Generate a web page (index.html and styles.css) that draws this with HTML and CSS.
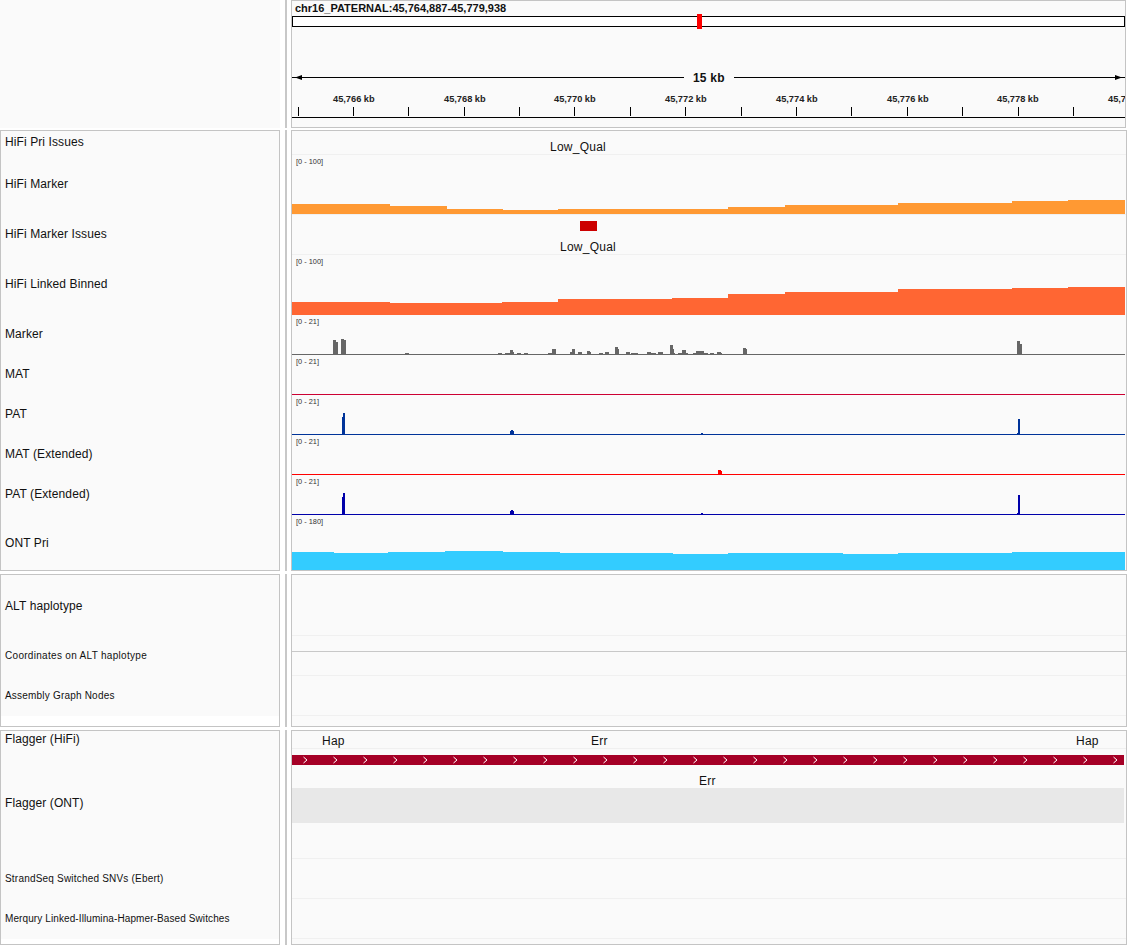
FILE: index.html
```html
<!DOCTYPE html>
<html lang="en">
<head>
<meta charset="utf-8">
<title>IGV chr16_PATERNAL</title>
<link rel="stylesheet" href="styles.css">
</head>
<body>
<main class="browser">

  <section class="row row-header">
    <div class="names names-plain"></div>
    <div class="gutter"></div>
    <div class="tracks tracks-header">
      <svg class="plot" width="833" height="126" viewBox="292 1 833 126">
        <text class="locus" x="295" y="12">chr16_PATERNAL:45,764,887-45,779,938</text>
        <rect class="ideogram" x="292.5" y="16.5" width="832" height="10"/>
        <rect class="cursor" x="697" y="14" width="5" height="15"/>
        <path class="ink" d="M292 77.5H684M734 77.5H1125"/>
        <path class="head" d="M302 75L295 77.5L302 80ZM1115 75L1122 77.5L1115 80Z"/>
        <text class="span" x="693" y="82">15 kb</text>
        <g class="ticklabels">
          <text x="333" y="102">45,766 kb</text>
          <text x="444" y="102">45,768 kb</text>
          <text x="554" y="102">45,770 kb</text>
          <text x="665" y="102">45,772 kb</text>
          <text x="776" y="102">45,774 kb</text>
          <text x="887" y="102">45,776 kb</text>
          <text x="997" y="102">45,778 kb</text>
          <text x="1108" y="102">45,780 kb</text>
        </g>
        <path class="ink" d="M298.5 107V116M353.5 107V116M408.5 107V116M464.5 107V116M519.5 107V116M574.5 107V116M630.5 107V116M685.5 107V116M741.5 107V116M796.5 107V116M851.5 107V116M907.5 107V116M962.5 107V116M1018.5 107V116M1073.5 107V116M292 117.5H1125"/>
      </svg>
    </div>
  </section>

  <section class="row row-data">
    <div class="names">
      <div class="name h24">HiFi Pri Issues</div>
      <div class="name h60">HiFi Marker</div>
      <div class="name h40">HiFi Marker Issues</div>
      <div class="name h60">HiFi Linked Binned</div>
      <div class="name h40">Marker</div>
      <div class="name h40">MAT</div>
      <div class="name h40">PAT</div>
      <div class="name h40">MAT (Extended)</div>
      <div class="name h40">PAT (Extended)</div>
      <div class="name name-low h55">ONT Pri</div>
    </div>
    <div class="gutter"></div>
    <div class="tracks">
      <div class="track h24 sep">
        <svg class="plot" width="834" height="23" viewBox="292 131 834 23">
          <text class="feature" x="550" y="151">Low_Qual</text>
        </svg>
      </div>
      <div class="track h60 sep">
        <svg class="plot" width="834" height="59" viewBox="292 155 834 59">
          <text class="range" x="296" y="164">[0 - 100]</text>
          <path class="c-marker" d="M292 214V204H390V206H447V209H503V210H558V209H728V207H785V205H898V203H1012V201H1068V200H1125V214Z"/>
        </svg>
      </div>
      <div class="track h40 sep">
        <svg class="plot" width="834" height="39" viewBox="292 215 834 39">
          <rect class="c-issue" x="580" y="221" width="17" height="10"/>
          <text class="feature" x="560" y="251">Low_Qual</text>
        </svg>
      </div>
      <div class="track h60">
        <svg class="plot" width="834" height="60" viewBox="292 255 834 60">
          <text class="range" x="296" y="264">[0 - 100]</text>
          <path class="c-linked" d="M292 315V302H390V303H502V302H558V299H672V298H728V294H785V292H898V289H1012V288H1068V287H1125V315Z"/>
        </svg>
      </div>
      <div class="track h40">
        <svg class="plot" width="834" height="40" viewBox="292 315 834 40">
          <text class="range" x="296" y="324">[0 - 21]</text>
          <path class="c-grey" d="M292 354H1125V355H292ZM333 354V340H336V342H338V354ZM341 354V339H344V340H346V354ZM405 354V353H409V354ZM498 354V353H502V354ZM505 354V353H510V350H513V352H514V354ZM517 354V353H521V354ZM524 354V353H528V354ZM548 354V353H552V349H556V354ZM570 354V352H572V349H575V354ZM578 354V352H582V353H582V354ZM587 354V351H590V352H591V354ZM599 354V353H603V354ZM605 354V352H609V354ZM615 354V347H618V349H619V354ZM626 354V352H630V354ZM631 354V353H638V354ZM647 354V352H651V353H652V354ZM652 354V353H656V354ZM658 354V352H663V354ZM670 354V345H673V349H674V353H675V354ZM678 354V353H682V350H686V353H688V354ZM693 354V353H696V351H704V353H708V354ZM710 354V353H714V354ZM717 354V352H721V353H722V354ZM743 354V348H746V349H747V354ZM1017 354V341H1020V344H1022V354Z"/>
        </svg>
      </div>
      <div class="track h40">
        <svg class="plot" width="834" height="40" viewBox="292 355 834 40">
          <text class="range" x="296" y="364">[0 - 21]</text>
          <rect class="c-mat" x="292" y="394" width="833" height="1"/>
        </svg>
      </div>
      <div class="track h40">
        <svg class="plot" width="834" height="40" viewBox="292 395 834 40">
          <text class="range" x="296" y="404">[0 - 21]</text>
          <path class="c-pat" d="M292 434H1125V435H292ZM342 434V417H343V413H345V434ZM510 434V431H511V430H513V431H514V434ZM701 434V433H703V434ZM1017 434V433H1018V419H1020V434Z"/>
        </svg>
      </div>
      <div class="track h40">
        <svg class="plot" width="834" height="40" viewBox="292 435 834 40">
          <text class="range" x="296" y="444">[0 - 21]</text>
          <path class="c-matx" d="M292 474H1125V475H292ZM718 474V470H721V471H722V474Z"/>
        </svg>
      </div>
      <div class="track h40">
        <svg class="plot" width="834" height="40" viewBox="292 475 834 40">
          <text class="range" x="296" y="484">[0 - 21]</text>
          <path class="c-patx" d="M292 514H1125V515H292ZM342 514V497H343V493H345V514ZM510 514V511H511V510H513V511H514V514ZM701 514V513H703V514ZM1017 514V513H1018V495H1020V514Z"/>
        </svg>
      </div>
      <div class="track h55">
        <svg class="plot" width="834" height="55" viewBox="292 515 834 55">
          <text class="range" x="296" y="524">[0 - 180]</text>
          <path class="c-ont" d="M292 570V552H334V553H388V552H445V551H503V552H560V553H673V554H728V553H843V554H898V553H1012V552H1125V570Z"/>
        </svg>
      </div>
    </div>
  </section>

  <section class="row row-alt">
    <div class="names">
      <div class="name name-low h61">ALT haplotype</div>
      <div class="name small small-wide h40">Coordinates on ALT haplotype</div>
      <div class="name small h40">Assembly Graph Nodes</div>
    </div>
    <div class="gutter"></div>
    <div class="tracks">
      <div class="track h61 sep"></div>
      <div class="track h16 sep-dark"></div>
      <div class="track h24 sep"></div>
      <div class="track h40 sep"></div>
    </div>
  </section>

  <section class="row row-flagger">
    <div class="names">
      <div class="name name-top h52">Flagger (HiFi)</div>
      <div class="name name-low h40">Flagger (ONT)</div>
      <div class="spacer"></div>
      <div class="name small h40">StrandSeq Switched SNVs (Ebert)</div>
      <div class="name small small-tight h40">Merqury Linked-Illumina-Hapmer-Based Switches</div>
    </div>
    <div class="gutter"></div>
    <div class="tracks">
      <div class="track h18 sep">
        <svg class="plot" width="834" height="17" viewBox="292 731 834 17">
          <text class="feature" x="322" y="745">Hap</text>
          <text class="feature" x="591" y="745">Err</text>
          <text class="feature" x="1076" y="745">Hap</text>
        </svg>
      </div>
      <div class="track h24">
        <svg class="plot" width="834" height="24" viewBox="292 749 834 24">
          <defs>
            <pattern id="chevrons" patternUnits="userSpaceOnUse" x="293" y="755" width="30" height="10">
              <path class="chevron" d="M10.5 2L14 5L10.5 8"/>
            </pattern>
          </defs>
          <rect class="c-flag" x="292" y="755" width="832" height="10"/>
          <rect fill="url(#chevrons)" x="292" y="755" width="832" height="10"/>
        </svg>
      </div>
      <div class="track h15">
        <svg class="plot" width="834" height="15" viewBox="292 773 834 15">
          <text class="feature" x="699" y="785">Err</text>
        </svg>
      </div>
      <div class="track h35 band"></div>
      <div class="track h36 sep"></div>
      <div class="track h40 sep"></div>
      <div class="track h40 sep"></div>
    </div>
  </section>

</main>
</body>
</html>
```

FILE: styles.css
```css
* {
  box-sizing: border-box;
}

html,
body {
  margin: 0;
  padding: 0;
  background: #ffffff;
}

body {
  width: 1143px;
  height: 945px;
  overflow: hidden;
  font-family: "Liberation Sans", Arial, sans-serif;
  color: #111111;
}

.browser {
  display: flex;
  flex-direction: column;
  width: 1143px;
}

.row {
  display: flex;
  flex: none;
}

.row-header {
  height: 128px;
  margin-bottom: 2px;
}

.row-data {
  height: 441px;
  margin-bottom: 3px;
}

.row-alt {
  height: 153px;
  margin-bottom: 3px;
}

.row-flagger {
  height: 215px;
}

.names {
  flex: none;
  width: 280px;
  border: 1px solid #c4c4c4;
  background: #ffffff;
}

.names-plain {
  border: 0;
  background: #fafafa;
}

.gutter {
  flex: none;
  width: 2px;
  margin: 0 4px 0 5px;
  background: #c8c8c8;
}

.tracks {
  flex: none;
  width: 836px;
  border: 1px solid #c4c4c4;
  background: #fafafa;
}

.tracks-header {
  width: 835px;
}

.name {
  display: flex;
  align-items: center;
  padding: 0 0 3px 4px;
  background: #fafafa;
  font-size: 12px;
  line-height: 14px;
  letter-spacing: 0.1px;
  white-space: nowrap;
}

.name-low {
  padding-bottom: 0;
}

.small {
  padding-bottom: 0;
  font-size: 10px;
  letter-spacing: 0.2px;
}

.small-wide {
  letter-spacing: 0.3px;
}

.small-tight {
  letter-spacing: 0.1px;
}

.name-top {
  align-items: flex-start;
  padding: 1px 0 0 4px;
}

.spacer {
  height: 36px;
  background: #fafafa;
}

.h15 { height: 15px; }
.h16 { height: 16px; }
.h18 { height: 18px; }
.h24 { height: 24px; }
.h35 { height: 35px; }
.h36 { height: 36px; }
.h40 { height: 40px; }
.h52 { height: 52px; }
.h55 { height: 55px; }
.h60 { height: 60px; }
.h61 { height: 61px; }

.track {
  overflow: hidden;
}

.sep {
  border-bottom: 1px solid #f0f0f0;
}

.sep-dark {
  border-bottom: 1px solid #c8c8c8;
}

.band {
  width: 832px;
  background: #e8e8e8;
}

.plot {
  display: block;
  shape-rendering: crispEdges;
}

.plot text {
  font-family: "Liberation Sans", Arial, sans-serif;
  shape-rendering: auto;
}

.locus {
  font-size: 11px;
  font-weight: 700;
  fill: #111111;
}

.ideogram {
  fill: #ffffff;
  stroke: #000000;
  stroke-width: 1;
}

.cursor {
  fill: #ff0000;
}

.ink {
  fill: none;
  stroke: #000000;
  stroke-width: 1;
}

.head {
  fill: #000000;
  stroke: none;
  shape-rendering: auto;
}

.span {
  font-size: 12px;
  font-weight: 700;
  letter-spacing: 0.2px;
  fill: #111111;
}

.ticklabels text {
  font-size: 9.25px;
  font-weight: 700;
  fill: #222222;
}

.range {
  font-size: 7.4px;
  fill: #333333;
}

.feature {
  font-size: 12px;
  letter-spacing: 0.25px;
  fill: #111111;
}

.c-marker { fill: #ff9933; }
.c-issue { fill: #cc0000; }
.c-linked { fill: #ff6633; }
.c-grey { fill: #666666; }
.c-mat { fill: #cc0033; }
.c-pat { fill: #003399; }
.c-matx { fill: #ff0000; }
.c-patx { fill: #0000aa; }
.c-ont { fill: #33ccff; }
.c-flag { fill: #a50026; }

.chevron {
  fill: none;
  stroke: #ffffff;
  stroke-width: 1;
  shape-rendering: auto;
}
```
